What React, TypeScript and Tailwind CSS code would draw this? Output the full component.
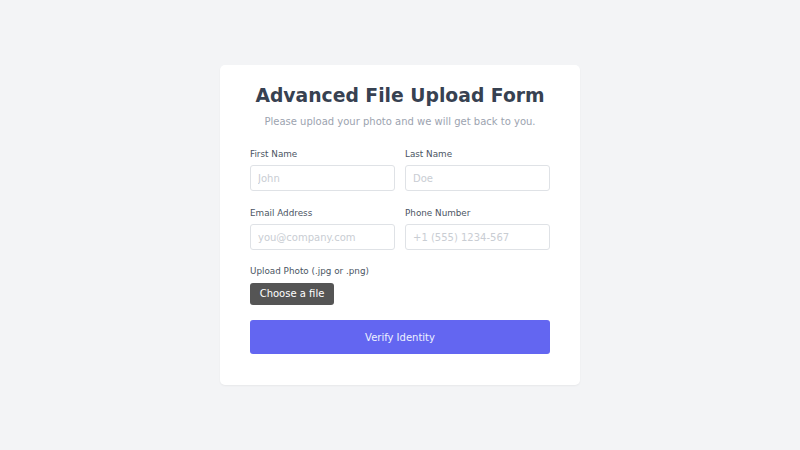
import React from "react";

const font = { fontFamily: '"DejaVu Sans", sans-serif' };

function Field({ label, placeholder }: { label: string; placeholder: string }) {
  return (
    <div className="flex flex-col">
      <label className="text-[8.8px] leading-[12px] text-[#4b5563]">{label}</label>
      <input
        className="mt-[5px] h-[26px] w-full rounded-[3px] border border-[#dfe2e6] bg-white px-[7px] text-[10px] text-[#374151] outline-none placeholder:text-[#c9cdd3]"
        placeholder={placeholder}
        style={font}
      />
    </div>
  );
}

export default function App() {
  return (
    <div className="flex h-[450px] w-[800px] items-start justify-center bg-[#f3f4f6] pt-[65px]" style={font}>
      <div className="flex h-[320px] w-[360px] flex-col rounded-[5px] bg-white px-[30px] pt-[19px] shadow-[0_1px_2px_rgba(0,0,0,0.05)]">
        <h1 className="whitespace-nowrap text-center text-[18.75px] font-bold leading-[24px] text-[#374151]">
          Advanced File Upload Form
        </h1>
        <p className="mt-[7px] whitespace-nowrap text-center text-[10px] leading-[14px] text-[#9ca3af]">
          Please upload your photo and we will get back to you.
        </p>
        <div className="mt-[19px] grid grid-cols-2 gap-x-[10px] gap-y-[16px]">
          <Field label="First Name" placeholder="John" />
          <Field label="Last Name" placeholder="Doe" />
          <Field label="Email Address" placeholder="you@company.com" />
          <Field label="Phone Number" placeholder="+1 (555) 1234-567" />
        </div>
        <label className="mt-[15px] text-[8.8px] leading-[12px] text-[#4b5563]">Upload Photo (.jpg or .png)</label>
        <div className="mt-[6px] flex">
          <button
            className="h-[22px] w-[84px] rounded-[3px] bg-[#555555] text-[10px] leading-[22px] text-white"
            style={font}
          >
            Choose a file
          </button>
        </div>
        <button
          className="mt-[15px] h-[34px] w-full rounded-[3px] bg-[#6366f1] text-[10px] text-[#eef2ff]"
          style={font}
        >
          Verify Identity
        </button>
      </div>
    </div>
  );
}
